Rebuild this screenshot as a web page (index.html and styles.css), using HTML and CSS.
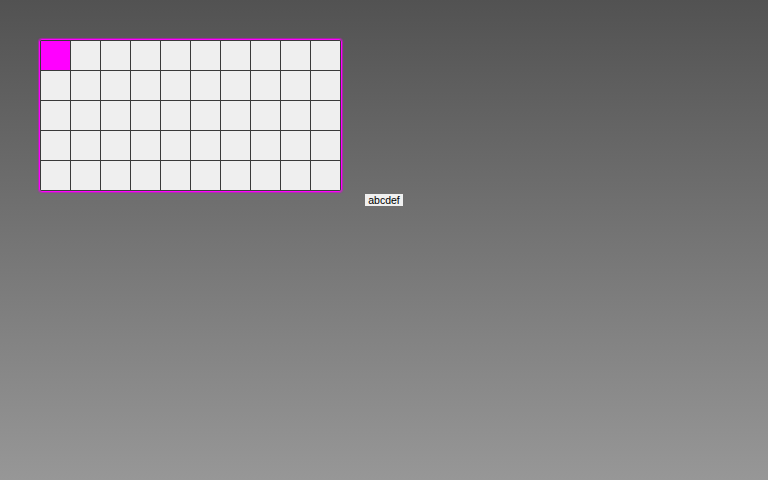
FILE: index.html
```html
<!DOCTYPE html>
<html>
<head>
<meta charset="utf-8">
<link rel="stylesheet" href="styles.css">
</head>
<body>
<div class="stage">
  <div class="frame">
    <div class="grid">
      <div class="cell on"></div><div class="cell"></div><div class="cell"></div><div class="cell"></div><div class="cell"></div><div class="cell"></div><div class="cell"></div><div class="cell"></div><div class="cell"></div><div class="cell"></div>
      <div class="cell"></div><div class="cell"></div><div class="cell"></div><div class="cell"></div><div class="cell"></div><div class="cell"></div><div class="cell"></div><div class="cell"></div><div class="cell"></div><div class="cell"></div>
      <div class="cell"></div><div class="cell"></div><div class="cell"></div><div class="cell"></div><div class="cell"></div><div class="cell"></div><div class="cell"></div><div class="cell"></div><div class="cell"></div><div class="cell"></div>
      <div class="cell"></div><div class="cell"></div><div class="cell"></div><div class="cell"></div><div class="cell"></div><div class="cell"></div><div class="cell"></div><div class="cell"></div><div class="cell"></div><div class="cell"></div>
      <div class="cell"></div><div class="cell"></div><div class="cell"></div><div class="cell"></div><div class="cell"></div><div class="cell"></div><div class="cell"></div><div class="cell"></div><div class="cell"></div><div class="cell"></div>
    </div>
  </div>
  <div class="label">abcdef</div>
</div>
</body>
</html>
```

FILE: styles.css
```css
html, body {
  margin: 0;
  height: 100%;
}
body {
  background: linear-gradient(to bottom, #525252, #979797);
  font-family: "Liberation Sans", Arial, sans-serif;
}
.stage {
  display: flex;
  align-items: flex-start;
  padding: 39px 0 0 39px;
}
.frame {
  border: 1px solid #ff00ff;
  border-radius: 3px;
  box-shadow: 0 0 1px 1px rgba(230, 0, 230, 0.55);
  overflow: hidden;
}
.grid {
  display: grid;
  grid-template-columns: repeat(10, 29px);
  grid-auto-rows: 29px;
  gap: 1px;
  padding: 1px;
  background: #3a3a3a;
}
.cell {
  background: #efefef;
}
.cell.on {
  background: #ff00ff;
}
.label {
  margin: 155px 0 0 23px;
  height: 12px;
  width: 38px;
  background: #f0f0f0;
  color: #000;
  font-size: 10.5px;
  line-height: 13px;
  text-align: center;
}
```
